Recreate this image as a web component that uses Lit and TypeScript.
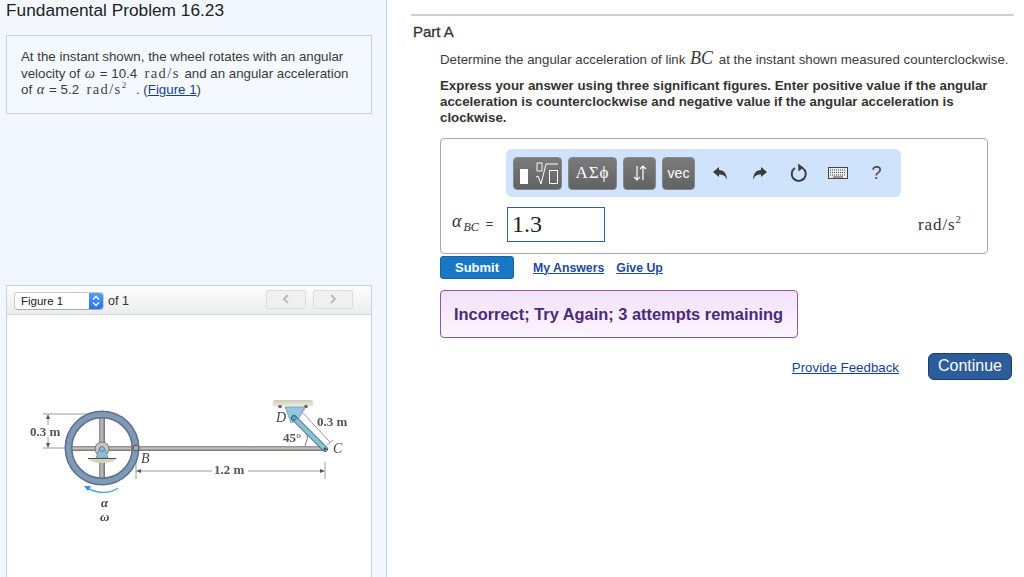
import { LitElement, html, css, svg } from "lit";
import { customElement } from "lit/decorators.js";

const diagram = svg`
  <defs>
    <linearGradient id="bar" x1="0" y1="0" x2="0" y2="1"><stop offset="0" stop-color="#8d8a88"/><stop offset=".5" stop-color="#c4c1bd"/><stop offset="1" stop-color="#6f6d6b"/></linearGradient>
    <linearGradient id="spoke" x1="0" y1="0" x2="1" y2="0"><stop offset="0" stop-color="#8d8a88"/><stop offset=".5" stop-color="#c4c1bd"/><stop offset="1" stop-color="#6f6d6b"/></linearGradient>
    <linearGradient id="ceil" x1="0" y1="0" x2="0" y2="1"><stop offset="0" stop-color="#cfcab6"/><stop offset="1" stop-color="#f2f0e8"/></linearGradient>
  </defs>
  <g class="shapes">
    <g fill="none" stroke="#808080" stroke-width=".8">
      <path d="M43 414H100M43 448H66M48 416V425M48 437V446"/>
      <path d="M136 452V479M325 462V479M139 471H212M248 471H323"/>
      <path d="M136 471l5-2v4zM325 471l-5-2v4z" fill="#555" stroke="none"/>
      <path d="M48 414l-2 5h4zM48 448l-2-5h4z" fill="#555" stroke="none"/>
      <path d="M302 412L330 442M299 414l6-5M327 445l6-5"/>
      <path d="M305 446a22 22 0 0 0 2 -15" stroke="#555"/>
    </g>
    <rect x="136" y="446" width="190" height="5" fill="url(#bar)"/>
    <rect x="66" y="446" width="72" height="5" fill="url(#bar)"/>
    <rect x="99" y="414" width="6" height="70" fill="url(#spoke)"/>
    <circle cx="102" cy="448" r="33.500" fill="none" stroke="#5f7088" stroke-width="8"/>
    <circle cx="102" cy="448" r="33.500" fill="none" stroke="#7f99b8" stroke-width="5"/>
    <circle cx="136" cy="448" r="3" fill="#a9a6a2" stroke="#555" stroke-width="1"/>
    <circle cx="102" cy="449" r="7" fill="#c9c4bc" stroke="#77736d" stroke-width="1"/>
    <path d="M96 458l3-9h6l3 9z" fill="#8cc0da" stroke="#4f7f98" stroke-width=".6"/>
    <circle cx="102" cy="449" r="2.500" fill="#8cc0da" stroke="#3d6479" stroke-width=".7"/>
    <path d="M88 459H116Q112 463 102 463T88 459Z" fill="#d6d2bc"/>
    <path d="M88 458.500H116" stroke="#55534d" stroke-width="1"/>
    <path d="M118 488Q105 497 87 488" fill="none" stroke="#47abe6" stroke-width="1.500"/>
    <path d="M84 486l7 0-3 5z" fill="#2f94d6"/>
    <rect x="273" y="400" width="40" height="7" rx="2" fill="url(#ceil)"/>
    <circle cx="280" cy="406.500" r="1.800" fill="#666"/><circle cx="306" cy="406.500" r="1.800" fill="#666"/>
    <path d="M285 407H305L298 420L291 423Z" fill="#94c6dd" stroke="#5c8ea8" stroke-width=".6"/>
    <path d="M294 418L325 449" stroke="#3f6f88" stroke-width="6" stroke-linecap="round"/>
    <path d="M294 418L325 449" stroke="#8cc0da" stroke-width="4" stroke-linecap="round"/>
    <circle cx="294" cy="418" r="2.400" fill="#6f9db5" stroke="#33596c" stroke-width=".7"/>
    <circle cx="325" cy="449" r="1.500" fill="#4c4c4c"/>
  </g>
  <g class="fig">
    <text x="30" y="436">0.3 m</text>
    <text x="214" y="474">1.2 m</text>
    <text x="317" y="426">0.3 m</text>
    <text x="283" y="442">45°</text>
    <text x="141" y="463" class="it">B</text>
    <text x="276" y="422" class="it">D</text>
    <text x="333" y="453" class="it">C</text>
    <text x="101" y="507" class="it b">α</text>
    <text x="100" y="521" class="it b">ω</text>
  </g>
`;

@customElement("app-root")
export class AppRoot extends LitElement {
  static styles = css`
    :host { display: flex; width: 1024px; height: 577px; overflow: hidden; background: #fff;
      font-family: "Liberation Sans", Arial, sans-serif; color: #333; }
    .left { flex: none; background: #f2f7ff; border-right: 1px solid #c6d3e6;
      padding: 0 14px 0 6px; width: 366px; display: flex; flex-direction: column; }
    .title { font-size: 17.3px; line-height: 21px; color: #222; height: 35px; }
    .problem { border: 1px solid #c3d3e4; height: 79px; box-sizing: border-box; padding: 13px 14px 0; font-size: 13.3px;
      line-height: 16.7px; color: #3a3a3a; white-space: nowrap; background: #f4f8ff; }
    .m { font-family: "Liberation Serif", serif; font-size: 14.5px; letter-spacing: 1.4px; color: #444; line-height: 0; margin: 0 1px 0 0; }
    .mi { font-family: "Liberation Serif", serif; font-style: italic; font-size: 14.5px; line-height: 0; margin: 0 1px; }
    sup { font-size: 9px; line-height: 0; }
    a { color: #1240a0; text-decoration: underline; }
    .figure { margin-top: 171px; flex: 1; border: 1px solid #c3d3e4; border-bottom: 0; background: #fff; display: flex; flex-direction: column; }
    .ftool { height: 29px; box-sizing: border-box; flex: none; border-bottom: 1px solid #cfdae6; background: linear-gradient(#fdfdfd, #ececec);
      display: flex; align-items: center; padding: 0 18px 0 7px; font-size: 12.5px; color: #333; }
    .select { width: 90px; border: 1px solid #c9c9c9; border-bottom-color: #aaa; border-radius: 4px; background: #fff; display: flex;
      align-items: center; justify-content: space-between; padding-left: 6px; font-size: 11.5px; color: #222; box-sizing: border-box; overflow: hidden; height: 18px; margin: 2px 4px 0 0; }
    .spin { width: 14px; height: 18px; background: linear-gradient(#5aa2fb, #1f6fe8); display: flex; align-items: center; justify-content: center; }
    .of { margin-top: 2px; }
    .pg { width: 40px; height: 19px; box-sizing: border-box; border: 1px solid #dcdcdc; border-radius: 2px; background: #f0f0f0;
      display: flex; align-items: center; justify-content: center; margin-bottom: 2px; }
    .pg + .pg { margin-left: 7px; } .sp { flex: 1; }
    .canvas { display: block; flex: none; }
    .shapes { filter: blur(.35px); }
    .fig text { font-family: "Liberation Serif", serif; font-size: 13px; font-weight: 700; fill: #555; filter: blur(.2px); }
    .fig .it { font-style: italic; font-weight: 400; font-size: 14px; fill: #444; }
    .fig .b { font-weight: 700; font-size: 13px; }
    .right { flex: 1; padding: 14px 10px 0 24px; min-width: 0; }
    .rule { height: 2px; background: #cfcfcf; }
    h2 { margin: 7px 0 0 2px; font-size: 15px; line-height: 17px; font-weight: 400; color: #333; -webkit-text-stroke: .3px #333; }
    .body { margin-left: 29px; }
    .q { margin: 12px 0 0; font-size: 13.3px; line-height: 16px; color: #3a3a3a; white-space: nowrap; }
    .q .big { font-family: "Liberation Serif", serif; font-style: italic; font-size: 18px; line-height: 0; margin: 0 2px 0 1px; }
    .b { margin: 10px 0 0; font-size: 13.3px; font-weight: 700; line-height: 16px; color: #333; white-space: nowrap; }
    .answer { margin-top: 12px; width: 548px; height: 116px; box-sizing: border-box; border: 1px solid #aaa; border-radius: 4px;
      display: flex; flex-direction: column; padding: 10px 26px 0 11px; }
    .toolbar { align-self: flex-start; margin-left: 54px; width: 395px; height: 48px; box-sizing: border-box; background: #cfe3fd;
      border-radius: 6px; display: flex; align-items: center; padding: 0 0 0 7px; gap: 6px; flex: none; }
    .tb { height: 33px; flex: none; border-radius: 4px; background: linear-gradient(#7b7b7b, #626262); border: 1px solid #888; box-sizing: border-box; color: #fff;
      display: flex; align-items: center; justify-content: center; font-size: 14px; }
    .w49 { width: 49px; } .w33 { width: 33px; }
    .serif { font-family: "Liberation Serif", serif; font-size: 17px; letter-spacing: 1px; }
    .ic { display: flex; align-items: center; flex: none; }
    .ic span { display: flex; justify-content: center; width: 39px; color: #444; font-size: 18px; }
    .row { display: flex; align-items: center; margin-top: 10px; }
    .lab { font-size: 13px; width: 55px; color: #333; white-space: nowrap; flex: none; margin-bottom: 4px; }
    .lab i { font-family: "Liberation Serif", serif; font-size: 18px; position: relative; top: -1px; }
    .lab i.s { font-size: 12px; top: 3px; margin: 0 7px 0 2px; }
    .input { width: 98px; height: 35px; box-sizing: border-box; border: 1px solid #2a5db0; font-family: "Liberation Serif", serif; font-size: 24px;
      line-height: 33px; padding-left: 4px; color: #222; }
    .unit { margin-left: auto; margin-right: -1px; font-family: "Liberation Serif", serif; font-size: 17px; letter-spacing: .9px; color: #333; line-height: 20px; }
    .unit sup { font-size: 11px; }
    .acts { display: flex; align-items: center; margin-top: 2px; }
    .submit { width: 74px; height: 23px; border-radius: 3px; background: #1878c6; border: 1px solid #17659f; box-sizing: border-box; color: #fff; font-weight: 700;
      font-size: 13px; display: flex; align-items: center; justify-content: center; }
    .l { font-size: 12.3px; font-weight: 700; color: #1d4a9c; margin-left: 19px; }
    .l + .l { margin-left: 12px; }
    .fb { margin-top: 11px; width: 358px; height: 48px; box-sizing: border-box; border: 1px solid #8a5aa0; border-radius: 4px;
      background: linear-gradient(#f3e1fb, #fcf5ff); color: #4b2a78; font-size: 16.4px; font-weight: 700; display: flex; align-items: center; padding-left: 13px; white-space: nowrap; }
    .foot { display: flex; justify-content: flex-end; align-items: center; margin: 15px 2px 0 0; }
    .foot a { font-size: 13.3px; color: #13409c; margin-top: 2px; }
    .cont { margin-left: 29px; width: 84px; height: 27px; border-radius: 6px; background: #2c5c99; border: 1px solid #1d3f70; box-sizing: border-box; color: #fff;
      font-size: 16px; display: flex; align-items: center; justify-content: center; padding-bottom: 2px; }
  `;

  render() {
    return html`
      <div class="left">
        <div class="title">Fundamental Problem 16.23</div>
        <div class="problem">
          At the instant shown, the wheel rotates with an angular<br>
          velocity of <span class="mi">ω</span> = 10.4 &nbsp;<span class="m">rad/s</span> and an angular acceleration<br>
          of <span class="mi">α</span> = 5.2 &nbsp;<span class="m">rad/s<sup>2</sup></span> &nbsp;. (<a>Figure 1</a>)
        </div>
        <div class="figure">
          <div class="ftool">
            <div class="select">Figure 1
              <span class="spin"><svg width="8" height="12" viewBox="0 0 8 12" fill="none" stroke="#fff" stroke-width="1.3"><path d="M1 4.500L4 1.500L7 4.500M1 7.500L4 10.500L7 7.500"/></svg></span>
            </div>
            <span class="of">of 1</span><span class="sp"></span>
            <div class="pg"><svg width="8" height="10" viewBox="0 0 8 10" fill="none" stroke="#bcbcbc" stroke-width="2"><path d="M6 1L2 5L6 9"/></svg></div>
            <div class="pg"><svg width="8" height="10" viewBox="0 0 8 10" fill="none" stroke="#bcbcbc" stroke-width="2"><path d="M2 1L6 5L2 9"/></svg></div>
          </div>
          <svg class="canvas" width="364" height="262" viewBox="7 315 364 262">${diagram}</svg>
        </div>
      </div>
      <div class="right">
        <div class="rule"></div>
        <h2>Part A</h2>
        <div class="body">
          <p class="q">Determine the angular acceleration of link <span class="big">BC</span> at the instant shown measured counterclockwise.</p>
          <p class="b">Express your answer using three significant figures. Enter positive value if the angular<br>acceleration is counterclockwise and negative value if the angular acceleration is<br>clockwise.</p>
          <div class="answer">
            <div class="toolbar">
              <div class="tb w49">
                <svg width="47" height="31" viewBox="1 1 47 31" fill="none" stroke="#fff"><rect x="7" y="12" width="8" height="15" fill="#fff" stroke="none"/><rect x="24" y="6" width="5" height="8" stroke-width=".9"/><path d="M23 20l2-1 3 8 5-20h12" stroke-width="1"/><rect x="36.500" y="13.500" width="8" height="13" stroke-width="1"/></svg>
              </div>
              <div class="tb serif w49">ΑΣϕ</div>
              <div class="tb w33"><svg width="16" height="18" viewBox="0 0 16 18" fill="none" stroke="#fff" stroke-width="1.200"><path d="M5 2V16M2 13l3 3 3-3M11 16V2M8 5l3-3 3 3"/></svg></div>
              <div class="tb w33">vec</div>
              <div class="ic">
                <span><svg width="15" height="15" viewBox="0 0 15 15" fill="#3c3c3c"><path d="M0 6L6 1V4C11 4 14 8 14 14C12.500 10 10.500 8.500 6 8.500V11Z"/></svg></span>
                <span><svg width="15" height="15" viewBox="0 0 15 15" fill="#3c3c3c"><path d="M15 6L9 1V4C4 4 1 8 1 14C2.500 10 4.500 8.500 9 8.500V11Z"/></svg></span>
                <span><svg width="18" height="20" viewBox="0 0 18 20" fill="none" stroke="#3c3c3c" stroke-width="2"><path d="M12.500 5A7 7 0 1 1 5 5"/><path d="M8 0.500L13.500 4.500L8.500 8.500" fill="#3c3c3c" stroke="none"/></svg></span>
                <span><svg width="20" height="12" viewBox="0 0 20 12" fill="#e8eef4" stroke="#444" stroke-width="1"><rect x=".5" y=".5" width="19" height="11"/><path d="M2 3H18M2 5.500H18M2 8H18" stroke-dasharray="1 1"/><path d="M5 10H15" stroke-width="1"/></svg></span>
                <span>?</span>
              </div>
            </div>
            <div class="row">
              <div class="lab"><i>α</i><i class="s">BC</i>=</div>
              <div class="input">1.3</div>
              <div class="unit">rad/s<sup>2</sup></div>
            </div>
          </div>
          <div class="acts"><div class="submit">Submit</div><a class="l">My Answers</a><a class="l">Give Up</a></div>
          <div class="fb">Incorrect; Try Again; 3 attempts remaining</div>
          <div class="foot"><a>Provide Feedback</a><div class="cont">Continue</div></div>
        </div>
      </div>
    `;
  }
}
